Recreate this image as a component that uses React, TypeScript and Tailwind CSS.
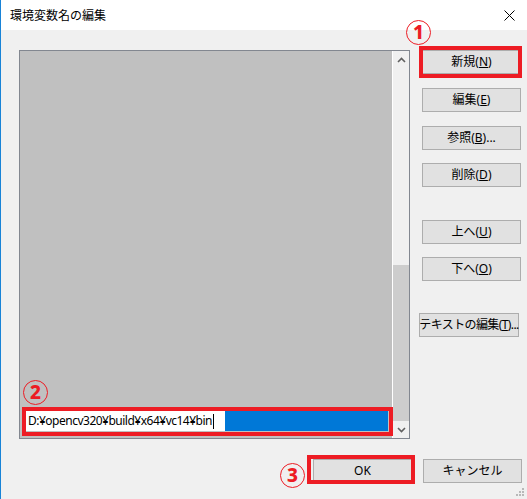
import React from "react";

const font = { fontFamily: '"Noto Sans", "Noto Sans CJK JP", sans-serif' };

function Btn({ children, className = "" }: { children: React.ReactNode; className?: string }) {
  return (
    <div
      className={
        "h-[24px] bg-[#e1e1e1] border border-[#adadad] flex items-center justify-center text-[12px] text-black leading-none whitespace-nowrap " +
        className
      }
    >
      <span>{children}</span>
    </div>
  );
}

function Circle({ n, className }: { n: string; className: string }) {
  return (
    <div
      className={
        "absolute w-[25px] h-[25px] rounded-full border border-[#ed1c24] flex items-center justify-center text-[#ed1c24] text-[19px] font-extrabold leading-none " +
        className
      }
    >
      {n}
    </div>
  );
}

export default function App() {
  return (
    <div className="relative w-[527px] h-[499px] flex flex-col overflow-hidden" style={font}>
      {/* title bar */}
      <div className="h-[30px] bg-white border-l border-[#1883d7] flex items-center justify-between pl-[9px] pr-[12px]">
        <span className="text-[12px] text-black" style={{ fontFamily: '"Noto Sans CJK JP", sans-serif' }}>
          環境変数名の編集
        </span>
        <svg width="11" height="11" viewBox="0 0 11 11">
          <path d="M0.5 0.5 L10.5 10.5 M10.5 0.5 L0.5 10.5" stroke="#000" strokeWidth="1" />
        </svg>
      </div>

      {/* body */}
      <div className="flex-1 bg-[#f0f0f0] border-l border-[#1883d7] flex flex-col">
        <div className="flex pt-[20px] pl-[18px]">
          {/* list box */}
          <div className="w-[391px] h-[389px] border border-[#828790] flex">
            <div className="flex-1 bg-[#c0c0c0] border-r border-white flex flex-col justify-end">
              <div className="h-[20px] ml-[5px] mr-[4px] mb-[7px] flex">
                <div className="w-[200px] bg-white flex items-center pl-[3px] text-[12px] text-black leading-none whitespace-nowrap overflow-hidden tracking-[-0.5px]">
                  <span>D:¥opencv320¥build¥x64¥vc14¥bin</span>
                  <span className="inline-block w-[1px] h-[15px] bg-black ml-[1px]" />
                </div>
                <div className="flex-1 bg-[#0078d7]" />
              </div>
            </div>
            {/* scrollbar */}
            <div className="w-[16px] bg-[#f0f0f0] flex flex-col">
              <div className="h-[17px] flex items-center justify-center">
                <svg width="9" height="6" viewBox="0 0 9 6">
                  <path d="M1 5 L4.5 1.5 L8 5" stroke="#606060" strokeWidth="1.6" fill="none" />
                </svg>
              </div>
              <div className="h-[197px]" />
              <div className="flex-1 bg-[#cdcdcd]" />
              <div className="h-[17px] flex items-center justify-center">
                <svg width="9" height="6" viewBox="0 0 9 6">
                  <path d="M1 1 L4.5 4.5 L8 1" stroke="#606060" strokeWidth="1.6" fill="none" />
                </svg>
              </div>
            </div>
          </div>

          {/* right buttons */}
          <div className="ml-[12px] w-[99px] flex flex-col">
            <Btn>
              新規(<span className="underline">N</span>)
            </Btn>
            <Btn className="mt-[14px]">
              編集(<span className="underline">E</span>)
            </Btn>
            <Btn className="mt-[14px]">
              参照(<span className="underline">B</span>)...
            </Btn>
            <Btn className="mt-[13px]">
              削除(<span className="underline">D</span>)
            </Btn>
            <Btn className="mt-[33px]">
              上へ(<span className="underline">U</span>)
            </Btn>
            <Btn className="mt-[13px]">
              下へ(<span className="underline">O</span>)
            </Btn>
            <Btn className="mt-[32px] -ml-[3px] w-[100px] tracking-[-0.6px]">
              テキストの編集(<span className="underline">T</span>)...
            </Btn>
          </div>
        </div>

        {/* bottom buttons */}
        <div className="flex justify-end pr-[5px] mt-[20px] gap-[11px]">
          <Btn className="w-[99px] border-[#0078d7]">OK</Btn>
          <Btn className="w-[99px]">キャンセル</Btn>
        </div>
        <div className="flex-1 flex justify-end items-end pr-[3px] pb-[3px]">
          <svg width="8" height="8" viewBox="0 0 8 8">
            <rect x="6" y="0" width="2" height="2" fill="#b8b8b8" />
            <rect x="3" y="3" width="2" height="2" fill="#b8b8b8" />
            <rect x="6" y="3" width="2" height="2" fill="#b8b8b8" />
            <rect x="0" y="6" width="2" height="2" fill="#b8b8b8" />
            <rect x="3" y="6" width="2" height="2" fill="#b8b8b8" />
            <rect x="6" y="6" width="2" height="2" fill="#b8b8b8" />
          </svg>
        </div>
      </div>

      {/* annotations */}
      <div className="absolute left-[419px] top-[46px] w-[103px] h-[32px] border-[4px] border-[#ed1c24]" />
      <div className="absolute left-[22px] top-[407px] w-[371px] h-[29px] border-[4px] border-[#ed1c24]" />
      <div className="absolute left-[307px] top-[455px] w-[108px] h-[29px] border-[4px] border-[#ed1c24]" />
      <Circle n="1" className="left-[406px] top-[20px]" />
      <Circle n="2" className="left-[23px] top-[380px]" />
      <Circle n="3" className="left-[280px] top-[463px]" />
    </div>
  );
}
